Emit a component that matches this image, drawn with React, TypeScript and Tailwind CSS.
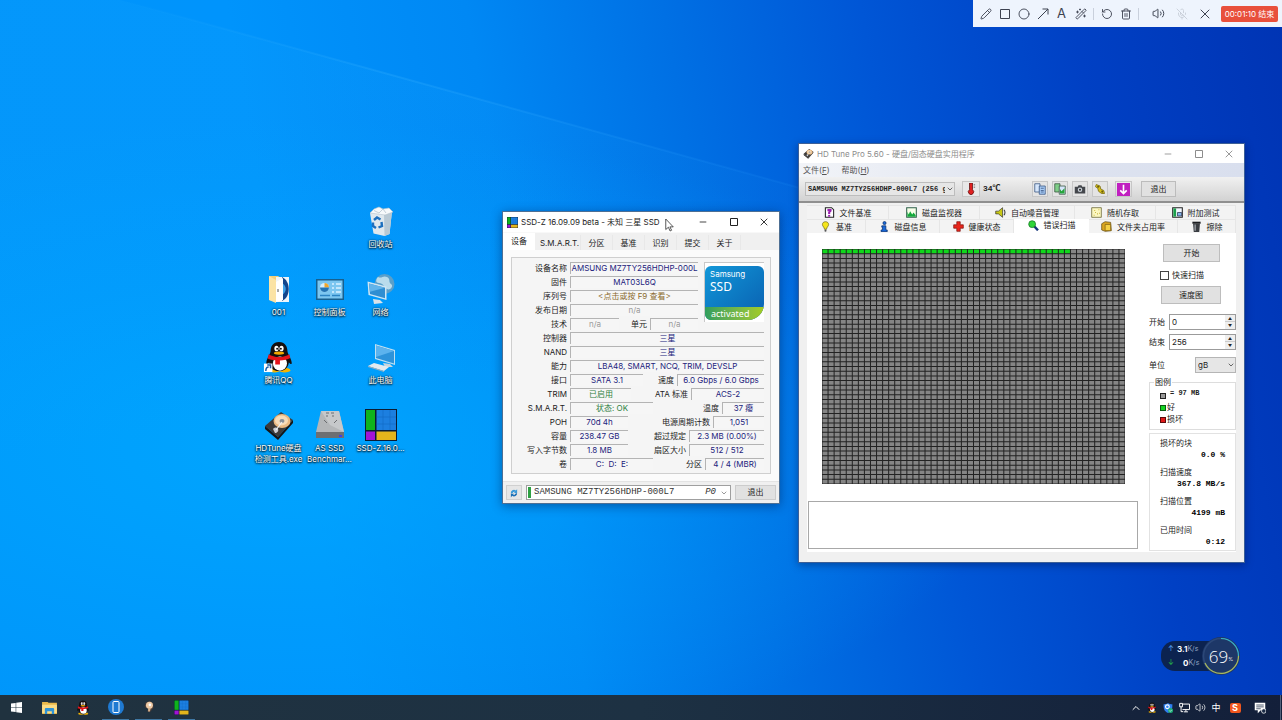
import type { ReactNode } from "react";
import {
  ChevronDown,
  ChevronUp,
  Circle,
  MicOff,
  Minus,
  Pencil,
  RotateCcw,
  Square,
  Trash2,
  Volume2,
  WandSparkles,
  X,
} from "lucide-react";

/* ---------- icons ---------- */

function QQIcon({ className, shortcut }: { className?: string; shortcut?: boolean }) {
  return (
    <svg viewBox="0 0 32 34" className={className} aria-hidden="true">
      <ellipse cx="11" cy="31" rx="6" ry="2.5" fill="#f5b400" />
      <ellipse cx="22" cy="31" rx="6" ry="2.5" fill="#f5b400" />
      <path d="M16 1C9.500 1 7 6 7 11c0 3-4 7-4.500 12 0 3 2 1 3-.5C6 28 10 32 16 32s10-4 10.500-9.500c1 1.500 3 3.500 3 .5C29 18 25 14 25 11c0-5-2.500-10-9-10z" fill="#15100f" />
      <ellipse cx="17" cy="24" rx="7.500" ry="7.500" fill="#fff" />
      <ellipse cx="13.300" cy="8" rx="2.200" ry="3" fill="#fff" />
      <ellipse cx="18.700" cy="8" rx="2.200" ry="3" fill="#fff" />
      <circle cx="14" cy="8.300" r="1" />
      <circle cx="18" cy="8.300" r="1" />
      <ellipse cx="16" cy="12.800" rx="5.500" ry="1.700" fill="#f5a800" />
      <path d="M5 14c6 4 16 4 22 0l1 4c-3 1.500-7 2.500-11 2.700V25h-5v-4.500c-3-.3-5.500-1-8-2z" fill="#e5131b" />
      {shortcut && (
        <>
          <path d="M0 24h9v9H0z" fill="#fff" />
          <path d="M2 32c0-3 1-4.500 3-4.500M3.500 25.500H7V29" stroke="#1c5fa8" strokeWidth="1.600" fill="none" />
        </>
      )}
    </svg>
  );
}

function SsdzIcon({ className }: { className?: string }) {
  return (
    <svg viewBox="0 0 32 32" className={className} aria-hidden="true">
      <path d="M0 0h32v32H0z" fill="#0b1c33" />
      <path d="M1 1h9v20H1z" fill="#0fb31c" />
      <path d="M11.500 1H31v20H11.500z" fill="#1c7fe0" />
      <path d="M1 22.500h9V31H1z" fill="#a312d6" />
      <path d="M11.500 22.500H31V31H11.500z" fill="#e3b51c" />
      <path d="M18 1v20M25 1v20M11.500 8H31M11.500 15H31" stroke="#1268c4" strokeWidth=".6" />
    </svg>
  );
}

function HardDiskIcon({ className }: { className?: string }) {
  return (
    <svg viewBox="0 0 32 32" className={className} aria-hidden="true">
      <path d="M2 17 18 3l12 8-15 17z" fill="#3d3a38" />
      <path d="M2 17v3l13 11v-3zM15 28v3l15-17v-3z" fill="#171514" />
      <ellipse cx="19" cy="12" rx="8.500" ry="7" fill="#e9b982" />
      <ellipse cx="18.500" cy="11.500" rx="6.500" ry="5" fill="#f7dcb8" />
      <ellipse cx="19" cy="12" rx="2.500" ry="2" fill="#8a8f96" />
      <path d="M10 20c1.500-2 4-2 5 0s-1 4-3 4z" fill="#c8ccd1" />
      <path d="m13 21 6-8" stroke="#eef1f4" strokeWidth="1.200" />
    </svg>
  );
}

function RecycleIcon() {
  return (
    <svg viewBox="0 0 32 32" className="h-8 w-8" aria-hidden="true">
      <path d="M5 8 27 6l-2.500 23-5 2-11-2.500z" fill="#dfe8ee" />
      <path d="M19 9 27 6l-2.500 23-5 2z" fill="#b9c9d4" />
      <path d="M5 8 9 4l5-2 4 2 6-1 4 4-8 3z" fill="#f6f9fb" stroke="#b5c3cd" strokeWidth=".6" />
      <path d="M9 5.500 14 8l4-4 3 4" stroke="#c3cfd8" fill="none" />
      <path d="m9 15 3-2.500 3.500 2M16.500 17l.5 4-3.500 1.500M11 23l-3-2v-3.500" stroke="#1d6fbe" strokeWidth="2.400" fill="none" />
    </svg>
  );
}

function FolderIcon() {
  return (
    <svg viewBox="0 0 32 32" className="h-8 w-8" aria-hidden="true">
      <path d="M6 3h9l3 2v24L6 27z" fill="#f2cf7c" />
      <path d="M13 4h13v25H13z" fill="#eef5fb" />
      <path d="M19 4c9 4 9 20 0 24z" fill="#14468c" />
      <path d="M19 10c5 3 5 9 0 12z" fill="#3fa0e6" />
      <path d="M13 9l7-4v22l-7 2z" fill="#fff" />
      <path d="M6 3l7 4v23l-7-3z" fill="#fbe3a4" />
      <path d="M15 16v3" stroke="#555" />
    </svg>
  );
}

function ControlPanelIcon() {
  return (
    <svg viewBox="0 0 32 32" className="h-8 w-8" aria-hidden="true">
      <path d="M2 6h28v21H2z" fill="#17608f" />
      <path d="M3.500 7.500h25v18h-25z" fill="#7cc6f0" />
      <circle cx="10.500" cy="14.500" r="4.500" fill="#d8effb" />
      <path d="M10.500 14.500V10a4.500 4.500 0 0 1 4.500 4.500z" fill="#f0a52a" />
      <path d="M10.500 14.500H6A4.500 4.500 0 0 0 15 14.500z" fill="#2374b5" />
      <path d="M18 11h2m2 0h5m-9 4h2m2 0h5m-9 4h2m2 0h5" stroke="#d9f1ff" strokeWidth="1.500" />
      <path d="M6 22.500h10m2 0h8" stroke="#2b84c4" strokeWidth="1.300" />
    </svg>
  );
}

function NetworkIcon() {
  return (
    <svg viewBox="0 0 32 32" className="h-8 w-8" aria-hidden="true">
      <circle cx="19.500" cy="11" r="10" fill="#5a9fc9" />
      <path d="M13 4c4 2 5-2 9 0s1 5 4 7-1 7-4 5-4-6-8-6-3-4-1-6z" fill="#b9dcec" />
      <path d="m2.500 8.500 19 5v13.500L3.500 22z" fill="#cfe6f3" />
      <path d="m4 10.500 16 4.200v10.500L5 21z" fill="#2f8ed2" />
      <path d="m4 10.500 16 4.200-15 4z" fill="#62b4ea" />
      <path d="m8 26 7 1 3 3-9 1z" fill="#d9e2e8" />
    </svg>
  );
}

function ComputerIcon() {
  return (
    <svg viewBox="0 0 32 32" className="h-8 w-8" aria-hidden="true">
      <path d="M10 3 30 9v15L10 18z" fill="#bfe0f2" />
      <path d="m11 4.500 18 5.500v12.500L11 17z" fill="#2d93da" />
      <path d="M11 4.500 29 10l-18 6z" fill="#5cb3ee" />
      <path d="m18 22 7 1 3 3-8 0z" fill="#c9d6de" />
      <path d="m3 25 6-3 15 4-5 4z" fill="#e3eaef" />
      <path d="m3 25 16 5v1L3 26z" fill="#9fb0bc" />
    </svg>
  );
}

function DriveIcon() {
  return (
    <svg viewBox="0 0 32 32" className="h-8 w-8" aria-hidden="true">
      <path d="M7 2h18l5 21H2z" fill="#b4b6b8" />
      <path d="M2 23h28v6H2z" fill="#6d6f72" />
      <path d="m7 2 9 14L30 23 25 2z" fill="#c6c8ca" />
      <path d="M12 4h3m2 0h3m-8 3h2m4 0h2m-10 4 3 3m10-3-3 3" stroke="#6b6d70" />
      <path d="M25 27h3" stroke="#4040e8" strokeWidth="2" />
    </svg>
  );
}

/* small 16x16 glyphs of the disk tool */
const glyphs: Record<string, ReactNode> = {
  file: (
    <>
      <path d="M2 1h9l3 3v11H2z" fill="#fff" stroke="#222" strokeWidth="1.500" />
      <path d="M5 3h6v3L9 8v2H6V7l2-1H5z" fill="#9b1fb0" />
      <path d="M6 11.500h3V14H6z" fill="#9b1fb0" />
    </>
  ),
  monitor: (
    <>
      <path d="M1 1h14v14H1z" fill="#f7ffe9" stroke="#2d5f4a" strokeWidth="1.500" />
      <path d="M2 14V7l2 4 2-5 3 5 2-3 3 4v2z" fill="#12a83a" />
    </>
  ),
  speaker: (
    <>
      <path d="M1 6h4l6-5v14l-6-5H1z" fill="#c8c814" stroke="#333" />
      <path d="M13 4c2 2 2 6 0 8" stroke="#333" fill="none" strokeWidth="1.500" />
    </>
  ),
  random: (
    <>
      <path d="M1 1h14v14H1z" fill="#fbf7c0" stroke="#55511c" />
      <path d="M4 12h1m1-4h1m2 2h1m1-6h1m0 5h1M5 5h1" stroke="#b89a12" strokeWidth="1.600" />
    </>
  ),
  extra: (
    <>
      <path d="M1 1h14v14H1z" fill="#f4f8ff" stroke="#222" strokeWidth="1.500" />
      <path d="M2 2h4v12H2z" fill="#1aa04a" />
      <path d="M8 8h6v5H8z" fill="#7fb6e6" stroke="#224" />
    </>
  ),
  bulb: (
    <>
      <path d="M8 1C5 1 3.500 3 3.500 5c0 3 3 4 3 7h3c0-3 3-4 3-7 0-2-1.500-4-4.500-4z" fill="#f5e51b" stroke="#6a6410" />
      <circle cx="8" cy="14" r="1.500" fill="#555" />
    </>
  ),
  info: (
    <>
      <circle cx="8" cy="3" r="2.300" fill="#1767d8" stroke="#062a66" />
      <path d="M4 7h6v6h2v2.500H3V13h2V9H4z" fill="#1767d8" stroke="#062a66" />
    </>
  ),
  cross: <path d="M5.500 1h5v4.500H15v5h-4.500V15h-5v-4.500H1v-5h4.500z" fill="#e8261c" stroke="#7d0f0a" />,
  search: (
    <>
      <path d="m8 8 6.500 7" stroke="#15357a" strokeWidth="3.500" />
      <circle cx="6" cy="6" r="5" fill="#2fd53a" stroke="#0f6a1c" />
    </>
  ),
  folder: (
    <>
      <path d="M1 4 6 1l8 1 1 12-9 1-5-2z" fill="#d9a520" stroke="#5c430a" />
      <path d="M6 5h8v9H6z" fill="#f5d044" stroke="#7a5b0e" />
    </>
  ),
  erase: (
    <>
      <path d="M3 4h10l-1 12H4z" fill="#3a3d42" />
      <path d="M2 1h12v3H2z" fill="#1c1e21" />
      <path d="M6 5v9" stroke="#b9bec4" strokeWidth="1.500" />
    </>
  ),
  copy: (
    <>
      <path d="M1 1h7v11H1z" fill="#d6e6fb" stroke="#34507d" />
      <path d="M7 4h8v11H7z" fill="#a9ccf6" stroke="#34507d" />
      <path d="M9 7h4m-4 3h4m-4 2h4" stroke="#34507d" />
    </>
  ),
  copyImage: (
    <>
      <path d="M1 1h7v11H1z" fill="#7fce88" stroke="#33513a" />
      <path d="M7 4h8v11H7z" fill="#d6e6fb" stroke="#33513a" />
      <path d="M8 14V8l2 3 4-4v7z" fill="#25a53a" />
    </>
  ),
  camera: (
    <>
      <path d="M1 5h4l1-2h4l1 2h4v9H1z" fill="#44474c" />
      <circle cx="8" cy="9" r="3" fill="#c9d0d8" />
      <circle cx="8" cy="9" r="1.300" fill="#222" />
    </>
  ),
  gears: (
    <>
      <path d="m3 2 5 2 1 4 4 2 1 4-4 0-4-3-1-4-3-2z" fill="#d8c21c" stroke="#746609" />
      <circle cx="5.500" cy="5" r="1.400" fill="#6a5e0a" />
      <circle cx="11" cy="11.500" r="1.400" fill="#6a5e0a" />
    </>
  ),
  down: (
    <>
      <path d="M0 0h16v16H0z" fill="#c01fc0" />
      <path d="M8 2v11M4 9l4 4 4-4" stroke="#fff" strokeWidth="2" fill="none" />
    </>
  ),
  thermo: (
    <>
      <path d="M6 0h4v9a3.500 3.500 0 1 1-4 0z" fill="#e02020" stroke="#5e1010" />
      <path d="M11.500 2h2m-2 2h2m-2 2h2" stroke="#777" />
    </>
  ),
};

function Glyph({ name, className = "h-[11px] w-[11px]" }: { name: string; className?: string }) {
  return (
    <svg viewBox="0 0 16 16" className={`shrink-0 ${className}`} aria-hidden="true">
      {glyphs[name]}
    </svg>
  );
}

/* ---------- desktop ---------- */

function Wallpaper() {
  return (
    <>
      <div className="absolute inset-0 bg-[linear-gradient(80deg,#0094fa_0%,#0094fc_25%,#0088f4_42%,#0070e4_56%,#0056d6_70%,#0040c4_85%,#0034b4_100%)]" />
      <div className="absolute inset-0 bg-[radial-gradient(ellipse_at_22%_62%,rgba(0,172,255,0.7)_0%,rgba(0,168,255,0.35)_28%,rgba(0,160,255,0)_52%)]" />
      <svg className="absolute inset-0 h-full w-full" viewBox="0 0 1282 720" preserveAspectRatio="none" aria-hidden="true">
        <defs>
          <linearGradient id="beam" x1="0" y1="0" x2="1" y2="0">
            <stop offset="0" stopColor="#3ab4ff" stopOpacity="0" />
            <stop offset=".4" stopColor="#3ab4ff" stopOpacity=".25" />
            <stop offset="1" stopColor="#2a9cff" stopOpacity="0.1" />
          </linearGradient>
          <linearGradient id="glow" x1="0" y1="0" x2="0.300" y2="1">
            <stop offset=".2" stopColor="#2ab4ff" stopOpacity=".09" />
            <stop offset=".6" stopColor="#2ab4ff" stopOpacity="0" />
          </linearGradient>
        </defs>
        <path d="M120 0 1282 321V720H0V0z" fill="url(#glow)" />
        <path d="M120 0 800 188" stroke="url(#beam)" strokeWidth="2" />
      </svg>
    </>
  );
}

const shortcuts: { label: string; icon: ReactNode; cell: string }[] = [
  { label: "回收站", icon: <RecycleIcon />, cell: "col-start-3 row-start-1" },
  { label: "001", icon: <FolderIcon />, cell: "col-start-1 row-start-2" },
  { label: "控制面板", icon: <ControlPanelIcon />, cell: "col-start-2 row-start-2" },
  { label: "网络", icon: <NetworkIcon />, cell: "col-start-3 row-start-2" },
  { label: "腾讯QQ", icon: <QQIcon className="h-8 w-8" shortcut />, cell: "col-start-1 row-start-3" },
  { label: "此电脑", icon: <ComputerIcon />, cell: "col-start-3 row-start-3" },
  { label: "HDTune硬盘检测工具.exe", icon: <HardDiskIcon className="h-8 w-8" />, cell: "col-start-1 row-start-4" },
  { label: "AS SSD Benchmar...", icon: <DriveIcon />, cell: "col-start-2 row-start-4" },
  { label: "SSD-Z.16.0...", icon: <SsdzIcon className="h-8 w-8" />, cell: "col-start-3 row-start-4" },
];

function DesktopIcons() {
  return (
    <div className="absolute left-[253px] top-[205px] grid auto-rows-[68px] grid-cols-[51px_51px_51px]">
      {shortcuts.map((s) => (
        <button key={s.label} className={`flex flex-col items-center gap-[2px] text-white ${s.cell}`}>
          <span className="flex h-8 w-8">{s.icon}</span>
          <span className="w-full text-center text-[8px] leading-[11px] [text-shadow:0_1px_2px_#000,0_0_2px_#000]">
            {s.label}
          </span>
        </button>
      ))}
    </div>
  );
}

function CaptureBar() {
  const draw = [
    { name: "画笔", icon: <Pencil size={12} strokeWidth={1.8} /> },
    { name: "矩形", icon: <svg viewBox="0 0 12 12" className="h-3 w-3"><path d="M1.500 1.500h9v9h-9z" fill="none" stroke="currentColor" /></svg> },
    { name: "圆形", icon: <Circle size={12} strokeWidth={1.8} /> },
    { name: "箭头", icon: <svg viewBox="0 0 12 12" className="h-3 w-3"><path d="m1 11 10-10M5.500 1H11v5.500" fill="none" stroke="currentColor" /></svg> },
    { name: "文字", icon: <span className="text-[13px] leading-none">A</span> },
    { name: "荧光笔", icon: <WandSparkles size={12} strokeWidth={1.8} /> },
  ];
  return (
    <div className="absolute right-0 top-0 flex h-[27px] w-[309px] items-center bg-[#eef4fd] pl-[3px] pr-1 text-[#3c4250]">
      {draw.map((d) => (
        <button key={d.name} aria-label={d.name} className="flex w-[19px] justify-center">
          {d.icon}
        </button>
      ))}
      <span className="mx-[3px] h-3 w-px bg-[#c9d0dc]" />
      <button aria-label="撤销" className="flex w-[19px] justify-center"><RotateCcw size={12} strokeWidth={1.8} /></button>
      <button aria-label="删除" className="flex w-[19px] justify-center"><Trash2 size={12} strokeWidth={1.8} /></button>
      <span className="ml-[3px] mr-2 h-3 w-px bg-[#c9d0dc]" />
      <button aria-label="声音" className="flex w-[23px] justify-center"><Volume2 size={13} strokeWidth={1.8} /></button>
      <button aria-label="麦克风" className="flex w-[23px] justify-center text-[#c3c9d3]"><MicOff size={12} strokeWidth={1.6} /></button>
      <button aria-label="关闭" className="flex w-[23px] justify-center"><X size={16} strokeWidth={1.5} /></button>
      <button className="ml-auto h-4 w-[57px] whitespace-nowrap rounded-[2px] bg-[#e8503c] text-center text-[8px] leading-4 text-white">
        00:01:10 结束
      </button>
    </div>
  );
}

/* ---------- SSD-Z ---------- */

function WindowButtons({ className = "" }: { className?: string }) {
  return (
    <div className={`flex ${className}`}>
      <button aria-label="最小化" className="flex w-[30px] items-center justify-center"><Minus size={10} strokeWidth={2} /></button>
      <button aria-label="最大化" className="flex w-[31px] items-center justify-center">
        <svg viewBox="0 0 8 8" className="h-2 w-2" aria-hidden="true"><path d="M.5.5h7v7h-7z" fill="none" stroke="currentColor" /></svg>
      </button>
      <button aria-label="关闭" className="flex w-[30px] items-center justify-center"><X size={12} strokeWidth={1.8} /></button>
    </div>
  );
}

function Value({ children, className }: { children: ReactNode; className: string }) {
  return (
    <span className={`block h-3 overflow-hidden whitespace-nowrap border-l border-t border-[#b4b4b4] bg-[#f6f6f6] text-center leading-[11px] ${className}`}>
      {children}
    </span>
  );
}

const NAVY = "text-[#23237c]";

type Row = { label: string; value: string; width: string; color?: string; label2?: string; value2?: string; width2?: string };

const topRows: Row[] = [
  { label: "设备名称", value: "AMSUNG MZ7TY256HDHP-000L", width: "flex-1" },
  { label: "固件", value: "MAT03L6Q", width: "flex-1" },
  { label: "序列号", value: "<点击或按 F9 查看>", width: "flex-1", color: "text-[#8a6a2c]" },
  { label: "发布日期", value: "n/a", width: "flex-1", color: "text-[#9a9a9a]" },
  { label: "技术", value: "n/a", width: "w-[49px]", color: "text-[#9a9a9a]", label2: "单元", value2: "n/a", width2: "w-[48px]" },
];

const rows: Row[] = [
  { label: "控制器", value: "三星", width: "flex-1" },
  { label: "NAND", value: "三星", width: "flex-1" },
  { label: "能力", value: "LBA48, SMART, NCQ, TRIM, DEVSLP", width: "flex-1" },
  { label: "接口", value: "SATA 3.1", width: "w-[73px]", label2: "速度", value2: "6.0 Gbps / 6.0 Gbps", width2: "w-[87px]" },
  { label: "TRIM", value: "已启用", width: "w-[61px]", color: "text-[#2e8040]", label2: "ATA 标准", value2: "ACS-2", width2: "w-[73px]" },
  { label: "S.M.A.R.T.", value: "状态: OK", width: "w-[83px]", color: "text-[#2e8040]", label2: "温度", value2: "37 癈", width2: "w-[42px]" },
  { label: "POH", value: "70d 4h", width: "w-[58px]", label2: "电源周期计数", value2: "1,051", width2: "w-[51px]" },
  { label: "容量", value: "238.47 GB", width: "w-[58px]", label2: "超过规定", value2: "2.3 MB (0.00%)", width2: "w-[75px]" },
  { label: "写入字节数", value: "1.8 MB", width: "w-[58px]", label2: "扇区大小", value2: "512 / 512", width2: "w-[75px]" },
  { label: "卷", value: "C:  D:  E:", width: "w-[83px]", label2: "分区", value2: "4 / 4 (MBR)", width2: "w-[59px]" },
];

function InfoRow({ row }: { row: Row }) {
  const muted = row.color === "text-[#9a9a9a]";
  return (
    <div className="flex h-[14px] items-center">
      <span className="mr-[3px] w-[55px] text-right">{row.label}</span>
      <Value className={`${row.width} whitespace-pre ${row.color ?? NAVY}`}>{row.value}</Value>
      {row.label2 && (
        <>
          <span className="mr-[3px] flex-1 text-right">{row.label2}</span>
          <Value className={`${row.width2} ${muted ? "text-[#9a9a9a]" : NAVY}`}>{row.value2}</Value>
        </>
      )}
    </div>
  );
}

const ssdzTabs = ["S.M.A.R.T.", "分区", "基准", "识别", "提交", "关于"];

function SsdzWindow() {
  return (
    <section className="absolute left-[502px] top-[211px] w-[278px] border border-[#4d6f94] bg-[#f0f0f0] text-[8px] text-[#222] shadow-[0_2px_10px_rgba(0,20,70,0.45)]">
      <header className="flex h-5 items-center bg-white pl-1">
        <SsdzIcon className="h-[11px] w-[11px]" />
        <h1 className="ml-[3px] whitespace-nowrap">SSD-Z 16.09.09 beta - 未知 三星 SSD</h1>
        <WindowButtons className="ml-auto" />
      </header>
      <nav role="tablist" className="flex h-[18px] items-end border-t border-[#f8f8f8]">
        <button role="tab" aria-selected="true" className="h-[17px] w-[32px] bg-white pb-px">设备</button>
        {ssdzTabs.map((t, i) => (
          <button key={t} role="tab" aria-selected="false" className={`h-[15px] border-r border-[#e8e8e8] ${i === 0 ? "w-[46px] pl-1" : "w-8"}`}>
            {t}
          </button>
        ))}
      </nav>
      <div className="bg-[#fbfbfb] px-2 py-[7px]">
        <div className="border border-[#cfcfcf] bg-[#f5f5f5] pb-[2px] pr-[6px] pt-[3px]">
          <div className="flex">
            <div className="flex-1">
              {topRows.map((r) => (
                <InfoRow key={r.label} row={r} />
              ))}
            </div>
            <div className="ml-[6px] mt-px flex h-[60px] w-[60px] flex-col border-l border-t border-[#c8c8c8] bg-white">
              <div className="mt-[3px] flex h-[54px] w-[59px] flex-col overflow-hidden rounded-[6px] rounded-br-[16px] bg-linear-to-br from-[#1397d8] to-[#0b5fb0] text-white">
                <span className="px-[5px] pt-[3px] text-[8px] leading-[11px]">Samsung</span>
                <span className="px-[5px] font-['Noto_Sans',sans-serif] text-[12px] leading-[13px]">SSD</span>
                <span className="mt-auto bg-linear-to-r from-[#2f9e5c] to-[#a4cc1e] px-[6px] font-['Noto_Sans',sans-serif] text-[9px] leading-[13px]">activated</span>
              </div>
            </div>
          </div>
          {rows.map((r) => (
            <InfoRow key={r.label} row={r} />
          ))}
        </div>
      </div>
      <footer className="flex items-center border-t border-[#e3e3e3] px-[3px] py-[3px]">
        <button aria-label="刷新" className="flex h-[15px] w-4 items-center justify-center border border-[#d0d0d0] bg-[#e6e6e6]">
          <svg viewBox="0 0 16 16" className="h-[10px] w-[10px]" aria-hidden="true">
            <path d="M3 9a5 5 0 0 1 8-5l2-2v6H8l1.500-2A3 3 0 0 0 6 8z" fill="#3a9ad9" />
            <path d="M13 8a5 5 0 0 1-8 4.500L3 15V9h5l-1.500 2A3 3 0 0 0 10 9z" fill="#1c6fb5" />
          </svg>
        </button>
        <div className="ml-1 flex h-[15px] flex-1 items-center border border-[#9f9f9f] bg-white pl-px font-['Liberation_Mono','Noto_Sans_CJK_SC',monospace] text-[9px] leading-[13px] text-[#333]">
          <span className="h-[11px] w-[3px] bg-[#2fa043]" />
          <select aria-label="驱动器" className="ml-[3px] min-w-0 flex-1 appearance-none bg-transparent">
            <option>SAMSUNG MZ7TY256HDHP-000L7</option>
          </select>
          <span className="italic">P0</span>
          <ChevronDown size={8} className="ml-1 mr-[2px] text-[#666]" />
        </div>
        <button className="ml-1 h-[15px] w-[41px] border border-[#cccccc] bg-[#e1e1e1] leading-[13px]">退出</button>
      </footer>
    </section>
  );
}

/* ---------- HD Tune ---------- */

const COLS = 50;
const ROWS = 50;
const SCANNED = 41;

function BlockMap() {
  return (
    <svg viewBox="0 0 302 235" preserveAspectRatio="none" className="block h-[235px] w-full" role="img" aria-label="扫描块">
      <path d="M0 0h302v235H0z" fill="#858585" />
      <rect width={(302 / COLS) * SCANNED} height={235 / ROWS} fill="#10d81c" />
      {Array.from({ length: COLS + 1 }, (_, i) => (
        <path key={`c${i}`} d={`M${(i * 302) / COLS} 0v235`} stroke="#222" />
      ))}
      {Array.from({ length: ROWS + 1 }, (_, i) => (
        <path key={`r${i}`} d={`M0 ${(i * 235) / ROWS}h302`} stroke="#222" />
      ))}
    </svg>
  );
}

const tabsBack = [
  ["file", "文件基准"],
  ["monitor", "磁盘监视器"],
  ["speaker", "自动噪音管理"],
  ["random", "随机存取"],
  ["extra", "附加测试"],
];

const tabsFront = [
  ["bulb", "基准"],
  ["info", "磁盘信息"],
  ["cross", "健康状态"],
  ["search", "错误扫描"],
  ["folder", "文件夹占用率"],
  ["erase", "擦除"],
];

function TuneTab({ icon, label, active }: { icon: string; label: string; active?: boolean }) {
  return (
    <button
      role="tab"
      aria-selected={!!active}
      className={`flex items-center justify-center gap-[5px] whitespace-nowrap ${
        active ? "bg-white pb-[2px]" : "border-r border-t border-[#e6e6e6] bg-[#f3f3f3]"
      }`}
    >
      <Glyph name={icon} />
      {label}
    </button>
  );
}

function Spinner({ id, label, value }: { id: string; label: string; value: string }) {
  return (
    <div className="flex h-4 items-center">
      <label htmlFor={id} className="w-5">{label}</label>
      <div className="flex h-4 flex-1 border border-[#9b9b9b] bg-white">
        <input id={id} defaultValue={value} className="w-0 min-w-0 flex-1 bg-transparent pl-[2px]" />
        <div className="flex w-[10px] flex-col text-[4px] leading-[7px]">
          <button aria-label={`${label}增加`} className="h-[7px] border-b border-[#ccc] bg-[#eee]">▲</button>
          <button aria-label={`${label}减少`} className="h-[7px] bg-[#eee]">▼</button>
        </div>
      </div>
    </div>
  );
}

const stats = [
  ["损坏的块", "0.0 %"],
  ["扫描速度", "367.8 MB/s"],
  ["扫描位置", "4199 mB"],
  ["已用时间", "0:12"],
];

const MONO = "font-['Liberation_Mono','Noto_Sans_CJK_SC',monospace]";

function ScanPanel() {
  return (
    <div className="flex w-[87px] flex-col">
      <button className="ml-[14px] h-[18px] w-[57px] border border-[#bdbdbd] bg-[#e1e1e1]">开始</button>
      <label className="ml-[11px] mt-[8px] flex h-[10px] items-center gap-[3px]">
        <input type="checkbox" className="h-[9px] w-[9px] appearance-none border border-[#444] bg-white" />
        快速扫描
      </label>
      <button className="ml-[12px] mt-[6px] h-[18px] w-[60px] border border-[#bdbdbd] bg-[#e1e1e1]">速度图</button>
      <div className="mt-[10px] flex flex-col gap-1">
        <Spinner id="from" label="开始" value="0" />
        <Spinner id="to" label="结束" value="256" />
      </div>
      <div className="mt-[7px] flex items-center justify-between">
        <label htmlFor="unit">单位</label>
        <div className="relative">
          <select id="unit" className="block h-4 w-[41px] appearance-none border border-[#b5b5b5] bg-[#e6e6e6] pl-[2px]">
            <option>gB</option>
          </select>
          <ChevronDown size={8} className="pointer-events-none absolute right-px top-1" />
        </div>
      </div>
      <fieldset className="mt-1 h-[53px] border border-[#dddddd] pl-[10px]">
        <legend className="-ml-[6px] px-px leading-[10px]">图例</legend>
        <ul>
          <li className="flex h-[13px] items-center gap-1">
            <span className="mt-1 h-[6px] w-[6px] border border-[#222] bg-[#999]" />
            <span className={`text-[7px] font-bold ${MONO}`}>= 97 MB</span>
          </li>
          <li className="flex h-[13px] items-center gap-px">
            <span className="mt-[2px] h-[6px] w-[6px] border border-[#0b5c12] bg-[#14d424]" />好
          </li>
          <li className="flex h-3 items-center gap-px">
            <span className="mt-[2px] h-[6px] w-[6px] border border-[#5c0b0b] bg-[#e01818]" />损坏
          </li>
        </ul>
      </fieldset>
      <dl className="mt-[3px] flex flex-col gap-[5px] border border-[#e2e2e2] px-[10px] pb-[2px] pt-[3px]">
        {stats.map(([k, v]) => (
          <div key={k} className="leading-[12px]">
            <dt>{k}</dt>
            <dd className={`whitespace-nowrap text-right font-bold text-black ${MONO}`}>{v}</dd>
          </div>
        ))}
      </dl>
    </div>
  );
}

function HdTuneWindow() {
  return (
    <section className="absolute left-[798px] top-[143px] w-[447px] border border-[#3c5f96] bg-[#f0f0f0] text-[8px] text-[#222] shadow-[0_2px_8px_rgba(0,10,60,0.4)]">
      <header className="flex h-[19px] items-center bg-white pl-1 text-[#8c8c8c]">
        <HardDiskIcon className="h-[11px] w-[11px]" />
        <h1 className="ml-[3px] whitespace-nowrap">HD Tune Pro 5.60 - 硬盘/固态硬盘实用程序</h1>
        <WindowButtons className="ml-auto" />
      </header>
      <div className="flex h-[14px] items-center gap-[12px] bg-linear-to-r from-[#f2f4f8] via-[#dfe4f0] to-[#d9dfee] px-1 text-[#555]">
        <button>文件(<u>F</u>)</button>
        <button>帮助(<u>H</u>)</button>
      </div>
      <div className="flex h-[26px] items-center border-b-2 border-[#8f8f8f] bg-linear-to-b from-[#f1f1f1] to-[#d2d2d2] pl-[6px]">
        <div className="relative">
          <select
            aria-label="驱动器"
            className={`block h-[14px] w-[150px] appearance-none overflow-hidden border border-[#bdbdbd] bg-[#e6e6e6] pl-[2px] pr-[9px] text-[7px] font-bold text-[#222] ${MONO}`}
          >
            <option>SAMSUNG MZ7TY256HDHP-000L7 (256 gB)</option>
          </select>
          <ChevronDown size={8} className="pointer-events-none absolute right-px top-[3px]" />
        </div>
        <span className="ml-[7px] flex h-4 w-[18px] items-center justify-center border border-[#c6c6c6] bg-[#e8e8e8]">
          <Glyph name="thermo" className="h-3 w-3" />
        </span>
        <span className={`ml-[3px] w-[49px] font-bold ${MONO}`}>34℃</span>
        <div className="flex gap-1">
          {["copy", "copyImage", "camera", "gears"].map((g) => (
            <button key={g} aria-label={g} className="flex h-4 w-4 items-center justify-center border border-[#c6c6c6] bg-[#e4e4e4]">
              <Glyph name={g} className="h-3 w-3" />
            </button>
          ))}
          <button aria-label="保存" className="ml-[3px] flex h-4 w-[17px] items-center justify-center border border-[#c6c6c6]">
            <Glyph name="down" className="h-[13px] w-[13px]" />
          </button>
        </div>
        <button className="ml-[9px] h-4 w-[35px] border border-[#bcbcbc] bg-[#e1e1e1]">退出</button>
      </div>
      <div className="px-2 pb-[10px] pt-[2px]">
        <div role="tablist">
          <div className="grid h-[14px] grid-cols-[82fr_91fr_95fr_81fr_80fr]">
            {tabsBack.map(([icon, label]) => (
              <TuneTab key={label} icon={icon} label={label} />
            ))}
          </div>
          <div className="grid h-[14px] grid-cols-[59fr_74fr_74fr_75fr_89fr_58fr]">
            {tabsFront.map(([icon, label]) => (
              <TuneTab key={label} icon={icon} label={label} active={label === "错误扫描"} />
            ))}
          </div>
        </div>
        <div className="flex gap-[11px] bg-white pb-px pt-[11px]">
          <div className="flex flex-1 flex-col">
            <div className="ml-[15px] mr-[13px] mt-[5px]">
              <BlockMap />
            </div>
            <div className="mb-[2px] ml-px mt-auto h-[48px] border border-[#a8a8a8] bg-white" />
          </div>
          <ScanPanel />
        </div>
      </div>
    </section>
  );
}

/* ---------- widget and taskbar ---------- */

function NetWidget() {
  return (
    <div className="absolute bottom-[45px] right-[42px] flex items-center text-white">
      <div className="-mr-3 flex h-[30px] w-[53px] flex-col justify-center rounded-l-[14px] bg-[#0c2350] pl-[7px] text-[8px] leading-[14px]">
        <span className="flex"><span className="w-[9px] text-[7px] text-[#5aa8f8]">↑</span><b>3.1</b><span className="text-[7px] text-[#93a4c4]">K/s</span></span>
        <span className="flex"><span className="w-[15px] text-[7px] text-[#28b84a]">↓</span><b>0</b><span className="text-[7px] text-[#93a4c4]">K/s</span></span>
      </div>
      <div className="relative flex h-[38px] w-[38px] items-center justify-center rounded-full bg-[#1d3767]">
        <svg viewBox="0 0 38 38" className="absolute inset-0" aria-hidden="true">
          <circle cx="19" cy="19" r="17.500" fill="none" stroke="#2c4878" strokeWidth="1.500" />
          <path d="M19 1.500A17.500 17.500 0 0 1 36.500 19" stroke="#38b4c8" strokeWidth="1.200" fill="none" />
          <path d="M36.500 19A17.500 17.500 0 0 1 3 26" stroke="#a9b85a" strokeWidth="1.200" fill="none" />
        </svg>
        <span className="relative font-['Open_Sans',sans-serif] text-[17px] font-light leading-none">69</span>
        <span className="relative mt-2 text-[5px]">%</span>
      </div>
    </div>
  );
}

function Taskbar() {
  const apps = [
    {
      name: "开始",
      icon: (
        <svg viewBox="0 0 16 16" className="h-[11px] w-[11px]" aria-hidden="true">
          <path d="M0 2.200 6.800 1.300v6.200H0zM7.600 1.200 16 0v7.500H7.600zM0 8.300h6.800v6.400L0 13.800zM7.600 8.300H16V16l-8.400-1.200z" fill="#fff" />
        </svg>
      ),
    },
    {
      name: "文件资源管理器",
      icon: (
        <svg viewBox="0 0 16 14" className="h-[13px] w-[15px]" aria-hidden="true">
          <path d="M0 1h6l1 1h9v12H0z" fill="#e9b94b" />
          <path d="M0 4h16v9H0z" fill="#fbdc85" />
          <path d="M3 14V9c0-1 .5-1.500 1.500-1.500h7c1 0 1.500.5 1.500 1.500v5h-2.500v-3h-5v3z" fill="#2f93d6" />
        </svg>
      ),
    },
    { name: "QQ", icon: <QQIcon className="h-[15px] w-[14px]" /> },
    {
      name: "手机",
      open: true,
      icon: (
        <svg viewBox="0 0 16 16" className="h-4 w-4" aria-hidden="true">
          <circle cx="8" cy="8" r="8" fill="#1f7ad2" />
          <rect x="5" y="2.500" width="6" height="11" rx="1" fill="none" stroke="#fff" />
        </svg>
      ),
    },
    {
      name: "HD Tune",
      open: true,
      icon: (
        <svg viewBox="0 0 16 16" className="h-[14px] w-[14px]" aria-hidden="true">
          <path d="M4 3 9 1l4 3v5l-4 5-3-1 1-3-4-2z" fill="#4a3c38" />
          <circle cx="8.500" cy="6" r="4" fill="#ecc9a4" />
          <path d="M7 9h3l-1 4H7z" fill="#d8b48e" />
          <circle cx="9" cy="5.500" r="1.500" fill="#fff" />
        </svg>
      ),
    },
    { name: "SSD-Z", open: true, icon: <SsdzIcon className="h-[15px] w-[15px]" /> },
  ];
  return (
    <footer className="relative mt-auto flex h-[25px] shrink-0 items-stretch bg-linear-to-r from-[#20323f] via-[#1d3143] to-[#131f3a] text-white">
      {apps.map((a) => (
        <button key={a.name} aria-label={a.name} className="flex w-[33px] items-center justify-center px-[3px]">
          <span className={`flex h-full w-full items-center justify-center border-b ${a.open ? "border-[#3f78a4]" : "border-transparent"}`}>
            {a.icon}
          </span>
        </button>
      ))}
      <div className="ml-auto flex items-center">
        <button aria-label="显示隐藏的图标" className="flex w-4 justify-center"><ChevronUp size={12} /></button>
        <button aria-label="QQ" className="flex w-4 justify-center"><QQIcon className="h-[11px] w-[10px]" /></button>
        <button aria-label="安全" className="flex w-4 justify-center">
          <svg viewBox="0 0 16 16" className="h-[10px] w-[10px]" aria-hidden="true">
            <path d="M8 0c2 2 5 2 7 2 0 6 0 11-7 14C1 13 1 8 1 2c2 0 5 0 7-2z" fill="#2f7ff0" />
            <circle cx="7" cy="6" r="3" fill="none" stroke="#fff" strokeWidth="1.800" />
            <circle cx="12" cy="12" r="4" fill="#1fae7a" />
            <path d="m10 12 1.500 1.500L14 11" stroke="#fff" fill="none" />
          </svg>
        </button>
        <button aria-label="网络" className="flex w-4 justify-center">
          <svg viewBox="0 0 16 16" className="h-[11px] w-[11px]" fill="none" stroke="#fff" strokeWidth="1.400" aria-hidden="true">
            <path d="M5 3h10.300v8H5M10 11v3m-3 .3h6M1 2h4v5H1zM3 7v7h3" />
          </svg>
        </button>
        <button aria-label="音量" className="flex w-4 justify-center"><Volume2 size={11} strokeWidth={1.6} /></button>
        <button className="w-4 text-center text-[9px]">中</button>
        <button aria-label="搜狗输入法" className="ml-[3px] flex w-4 justify-center">
          <span className="h-[10px] w-[11px] rounded-[2px] bg-[#f0561d] text-center text-[9px] font-bold leading-[10px]">S</span>
        </button>
        <button aria-label="通知" className="ml-[11px] mr-[14px] flex w-3 justify-center">
          <svg viewBox="0 0 16 16" className="h-3 w-3" aria-hidden="true">
            <path d="M1 1h14v10H9l-4 4v-4H1z" fill="#fff" />
            <path d="M3 4h10M3 6.500h10M3 9h6" stroke="#1a2a44" />
            <circle cx="13" cy="12" r="3" fill="#1a2a44" stroke="#fff" />
          </svg>
        </button>
        <span className="mr-px h-[25px] w-px bg-[#53617a]" />
      </div>
    </footer>
  );
}

export default function App() {
  return (
    <main className="relative flex h-screen flex-col overflow-hidden bg-[#0078e8] font-['Inter','Noto_Sans_CJK_SC',sans-serif]">
      <Wallpaper />
      <DesktopIcons />
      <SsdzWindow />
      <HdTuneWindow />
      <CaptureBar />
      <NetWidget />
      <svg viewBox="0 0 12 18" className="absolute left-[665px] top-[218px] h-[14px] w-[9px]" aria-hidden="true">
        <path d="M1 1v14l3.500-3 2.300 5 2-1-2.300-4.500H11z" fill="#fff" stroke="#222" />
      </svg>
      <Taskbar />
    </main>
  );
}
